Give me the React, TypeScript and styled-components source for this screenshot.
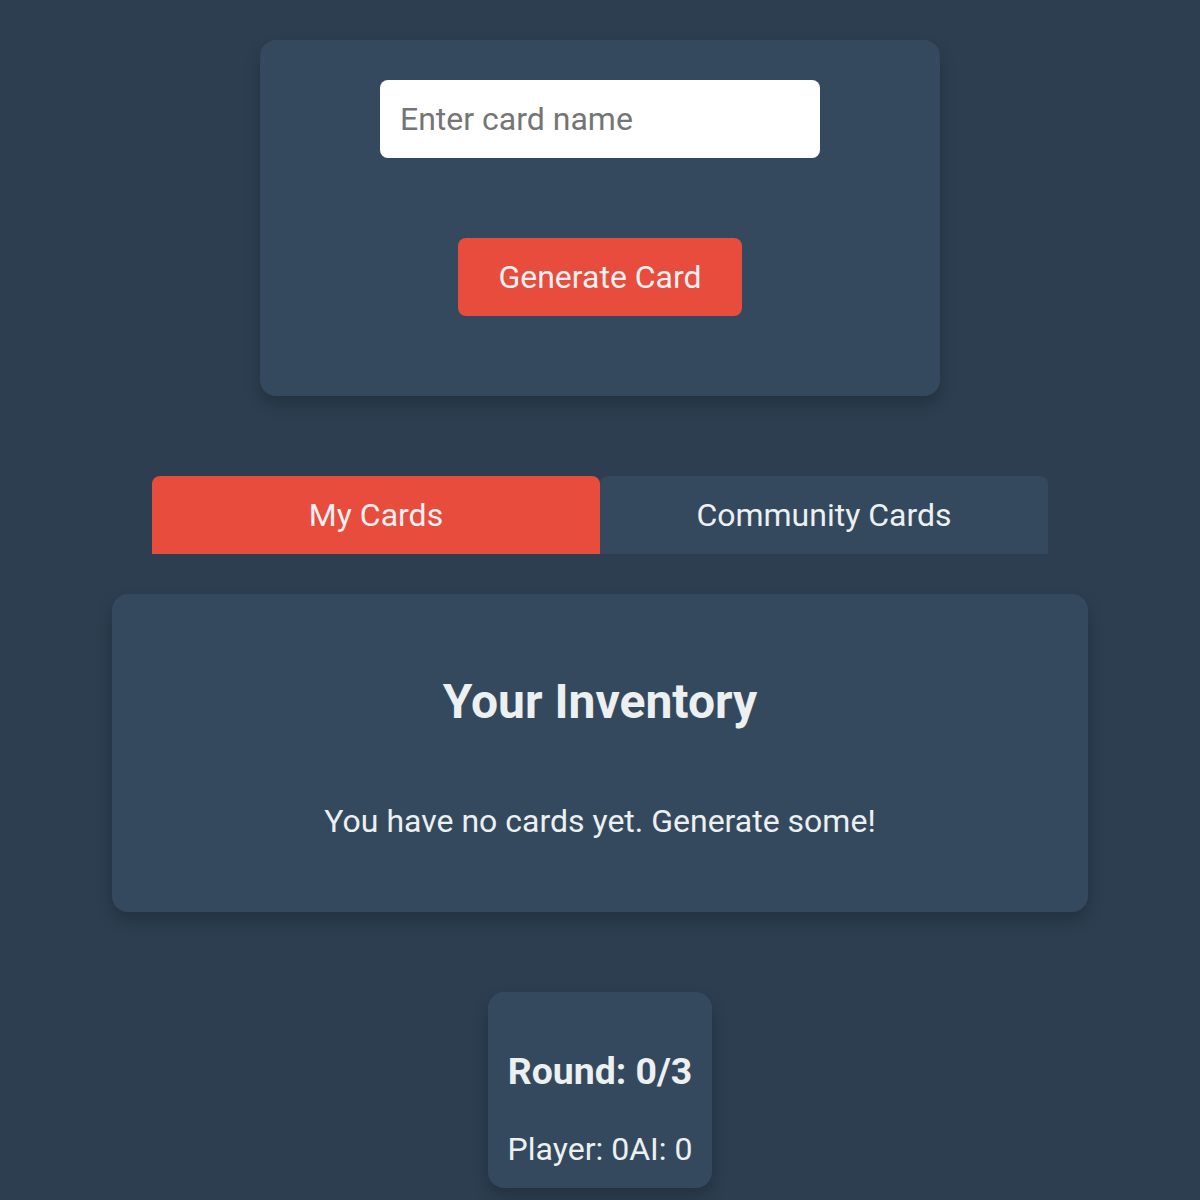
import React from "react";
import styled, { createGlobalStyle } from "styled-components";

const Global = createGlobalStyle`
  html, body { margin: 0; padding: 0; background: #2c3e50; }
  body { font-family: Roboto, "Liberation Sans", sans-serif; color: #ecf0f1; }
  * { box-sizing: border-box; }
`;

const Page = styled.div`
  min-height: 1200px;
  display: flex;
  flex-direction: column;
  align-items: center;
  padding-top: 40px;
  background: #2c3e50;
`;

const Panel = styled.div<{ $w: number }>`
  width: ${(p) => p.$w}px;
  background: #34495e;
  border-radius: 16px;
  box-shadow: 0 8px 16px rgba(0, 0, 0, 0.2);
  display: flex;
  flex-direction: column;
  align-items: center;
`;

const Creator = styled(Panel)`
  padding: 40px 40px 80px;
  gap: 80px;
`;

const Input = styled.input`
  width: 440px;
  height: 78px;
  border: none;
  border-radius: 8px;
  padding: 0 20px;
  font-family: Roboto, "Liberation Sans", sans-serif;
  font-size: 32px;
  color: #333;
  background: #fff;
  outline: none;
  &::placeholder { color: #757575; }
`;

const RedButton = styled.button`
  height: 78px;
  padding: 0 40px;
  border: none;
  border-radius: 8px;
  background: #e74c3c;
  color: #ecf0f1;
  font-family: Roboto, "Liberation Sans", sans-serif;
  font-size: 32px;
  cursor: pointer;
`;

const Tabs = styled.div`
  margin-top: 80px;
  width: 896px;
  display: grid;
  grid-template-columns: 1fr 1fr;
`;

const Tab = styled.button<{ $active?: boolean }>`
  height: 78px;
  border: none;
  border-radius: 8px 8px 0 0;
  background: ${(p) => (p.$active ? "#e74c3c" : "#34495e")};
  color: #ecf0f1;
  font-family: Roboto, "Liberation Sans", sans-serif;
  font-size: 32px;
  cursor: pointer;
`;

const Inventory = styled(Panel)`
  margin-top: 40px;
  padding: 40px;
`;

const Title = styled.h2`
  margin: 40px 0 0;
  font-size: 48px;
  font-weight: 700;
  line-height: 56px;
  color: #ecf0f1;
`;

const Empty = styled.p`
  margin: 72px 0 32px;
  font-size: 32px;
  line-height: 38px;
  color: #ecf0f1;
`;

const Score = styled(Panel)`
  margin-top: 80px;
  width: auto;
  padding: 20px;
`;

const Round = styled.h3`
  margin: 37px 0 0;
  font-size: 37.4px;
  line-height: 44px;
  font-weight: 700;
  color: #ecf0f1;
`;

const Scores = styled.div`
  margin-top: 37px;
  font-size: 32px;
  line-height: 38px;
  color: #ecf0f1;
`;

export default function App() {
  return (
    <>
      <Global />
      <Page>
        <Creator $w={680}>
          <Input placeholder="Enter card name" />
          <RedButton>Generate Card</RedButton>
        </Creator>
        <Tabs>
          <Tab $active>My Cards</Tab>
          <Tab>Community Cards</Tab>
        </Tabs>
        <Inventory $w={976}>
          <Title>Your Inventory</Title>
          <Empty>You have no cards yet. Generate some!</Empty>
        </Inventory>
        <Score $w={0}>
          <Round>Round: 0/3</Round>
          <Scores>
            <span>Player: 0</span>
            <span>AI: 0</span>
          </Scores>
        </Score>
      </Page>
    </>
  );
}
